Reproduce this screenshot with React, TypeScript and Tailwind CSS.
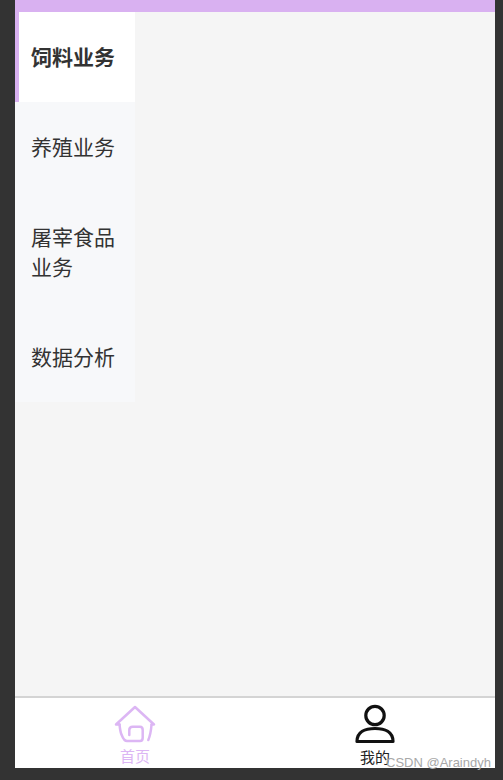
const font = { fontFamily: '"Microsoft YaHei", "Noto Sans CJK SC", "Liberation Sans", sans-serif' }

const items = ['饲料业务', '养殖业务', '屠宰食品业务', '数据分析']

function HomeIcon() {
  return (
    <svg width="42" height="38" viewBox="0 0 42 38" fill="none" stroke="#dcb6f4" strokeWidth="2.5" strokeLinecap="round" strokeLinejoin="round">
      <path d="M5.5 19.5H2L21 2L40 19.5H37.5" />
      <path d="M5.5 19.5C6 24 6.5 28 7.7 30C9 33.5 10.5 36 13 36H26C28 36 28.7 34.5 28.7 32.7V25C28.7 23 27.5 21.7 26 21.7H18.7C16.5 21.7 15.3 23 15.3 25V30" />
      <path d="M37.5 20C37 26 36 31 34.3 35" />
    </svg>
  )
}

function UserIcon() {
  return (
    <svg width="40" height="40" viewBox="0 0 40 40" fill="none" stroke="#111" strokeWidth="3.2">
      <circle cx="20" cy="11.5" r="9.2" />
      <path d="M2 37.5C2 28 10 24.5 20 24.5C30 24.5 38 28 38 37.5Z" strokeLinejoin="round" />
    </svg>
  )
}

export default function App() {
  return (
    <div className="relative w-[503px] h-[780px] bg-[#333333] overflow-hidden" style={font}>
      <div className="ml-[15px] w-[480px] h-[768px] flex flex-col bg-[#f5f5f5]">
        <div className="h-3 bg-[#d9b1f1] shrink-0" />
        <div className="flex-1 min-h-0">
          <div className="w-[120px] bg-[#f7f8fa]">
            {items.map((name, i) => (
              <div
                key={name}
                className={
                  i === 0
                    ? 'h-[90px] flex items-center pl-3 pr-4 pb-[2px] bg-white border-l-4 border-[#d9b1f1] font-bold text-[21px] leading-[30px] text-[#333333]'
                    : 'flex items-center px-4 pt-[29px] pb-[31px] text-[21px] leading-[30px] text-[#333333]'
                }
              >
                <span>{name}</span>
              </div>
            ))}
          </div>
        </div>
        <div className="h-[72px] shrink-0 bg-white border-t-2 border-[#d4d4d4] flex">
          <div className="flex-1 flex flex-col items-center pt-[7px]">
            <HomeIcon />
            <span className="text-[15px] leading-[16px] mt-[5px] text-[#dcb6f4]">首页</span>
          </div>
          <div className="flex-1 flex flex-col items-center pt-[6px]">
            <UserIcon />
            <span className="text-[15px] leading-[16px] mt-[5px] text-[#222222]">我的</span>
          </div>
        </div>
      </div>
      <span className="absolute left-[386px] top-[755px] text-[13px] leading-[16px] text-[#a8a8a8]" style={{ fontFamily: '"Liberation Sans", sans-serif' }}>
        CSDN @Araindyh
      </span>
    </div>
  )
}
